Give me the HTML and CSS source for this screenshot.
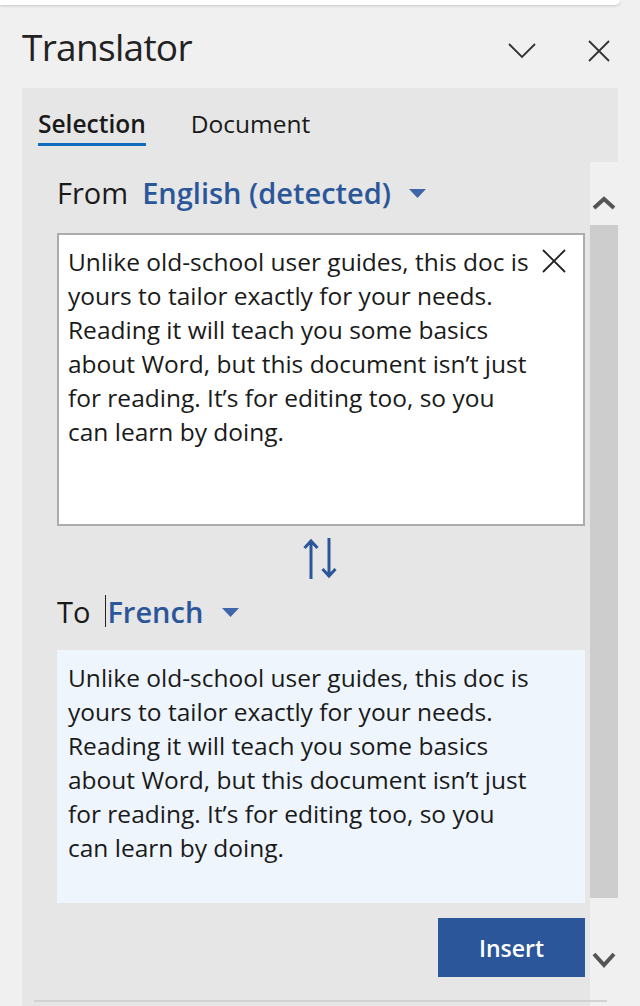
FILE: index.html
```html
<!DOCTYPE html>
<html>
<head>
<meta charset="utf-8">
<link rel="stylesheet" href="styles.css">
</head>
<body>
<div class="topbar"></div>
<div class="header">
  <div class="title">Translator</div>
  <div class="header-icons">
    <svg class="hicon" width="28" height="16" viewBox="0 0 28 16"><path d="M1 1 L14 14 L27 1" fill="none" stroke="#333" stroke-width="1.8"/></svg>
    <svg class="hicon" width="22" height="22" viewBox="0 0 22 22"><path d="M1 1 L21 21 M21 1 L1 21" fill="none" stroke="#333" stroke-width="1.8"/></svg>
  </div>
</div>
<div class="panel">
  <div class="tabs">
    <div class="tab active">Selection</div>
    <div class="tab">Document</div>
  </div>
  <div class="body">
    <div class="content">
      <div class="lang-row from-row">
        <span class="lang-label">From</span>
        <span class="lang-value">English (detected)</span>
        <svg class="caret" width="17" height="9" viewBox="0 0 17 9"><path d="M0 0 H17 L8.5 9 Z" fill="#3f66a8"/></svg>
      </div>
      <div class="source-box">
        <p class="text">Unlike old-school user guides, this doc is<br>yours to tailor exactly for your needs.<br>Reading it will teach you some basics<br>about Word, but this document isn’t just<br>for reading. It’s for editing too, so you<br>can learn by doing.</p>
        <svg class="clear" width="26" height="24" viewBox="0 0 26 24"><path d="M2 1 L24 23 M24 1 L2 23" fill="none" stroke="#222" stroke-width="1.8"/></svg>
      </div>
      <div class="swap">
        <svg width="36" height="42" viewBox="0 0 36 42"><path d="M8 41 V3 M1.5 10 L8 3 L14.5 10 M26 0 V38 M19.5 31 L26 38 L32.5 31" fill="none" stroke="#2b579a" stroke-width="3"/></svg>
      </div>
      <div class="lang-row to-row">
        <span class="lang-label">To</span>
        <span class="cursor"></span>
        <span class="lang-value">French</span>
        <svg class="caret" width="17" height="9" viewBox="0 0 17 9"><path d="M0 0 H17 L8.5 9 Z" fill="#3f66a8"/></svg>
      </div>
      <div class="target-box">
        <p class="text">Unlike old-school user guides, this doc is<br>yours to tailor exactly for your needs.<br>Reading it will teach you some basics<br>about Word, but this document isn’t just<br>for reading. It’s for editing too, so you<br>can learn by doing.</p>
      </div>
      <div class="actions">
        <button class="insert">Insert</button>
      </div>
    </div>
    <div class="scrollbar">
      <svg class="sarrow up" width="24" height="14" viewBox="0 0 24 14"><path d="M2 12 L12 3 L22 12" fill="none" stroke="#555" stroke-width="4"/></svg>
      <div class="thumb"></div>
      <svg class="sarrow down" width="24" height="16" viewBox="0 0 24 16"><path d="M2 2 L12 13 L22 2" fill="none" stroke="#555" stroke-width="4"/></svg>
    </div>
  </div>
  <div class="bottom-line"></div>
</div>
</body>
</html>
```
FILE: styles.css
```css
html, body {
  margin: 0;
  padding: 0;
}
body {
  width: 640px;
  height: 1006px;
  overflow: hidden;
  background: #f0f0f0;
  font-family: "Open Sans", "Noto Sans", sans-serif;
  color: #1a1a1a;
}
.topbar {
  width: 620px;
  height: 5px;
  background: #ffffff;
  border-bottom-right-radius: 10px;
  box-shadow: 0 1px 3px rgba(0,0,0,0.18);
}
.header {
  height: 83px;
  display: flex;
  align-items: flex-start;
  justify-content: space-between;
  padding-left: 22px;
  padding-right: 30px;
  box-sizing: border-box;
}
.title {
  font-size: 37px;
  font-weight: 400;
  color: #222;
  margin-top: 19px;
  line-height: 46px;
  letter-spacing: -0.7px;
}
.header-icons {
  display: flex;
  align-items: center;
  gap: 52px;
  margin-top: 35px;
}
.panel {
  margin-left: 22px;
  width: 596px;
  height: 918px;
  background: #e6e6e6;
  position: relative;
  display: flex;
  flex-direction: column;
}
.tabs {
  height: 74px;
  flex-shrink: 0;
  display: flex;
  gap: 45px;
  padding-left: 16px;
  box-sizing: border-box;
  padding-top: 20px;
}
.tab {
  font-size: 24.5px;
  line-height: 32px;
  height: 35px;
  color: #1a1a1a;
}
.tab.active {
  font-weight: 600;
  border-bottom: 3px solid #0f6cbd;
}
.body {
  display: flex;
  flex: 1;
  min-height: 0;
}
.content {
  width: 568px;
  padding-left: 35px;
  padding-right: 5px;
  box-sizing: border-box;
}
.lang-row {
  display: flex;
  align-items: center;
  font-size: 29px;
}
.from-row {
  height: 71px;
  gap: 14px;
  padding-bottom: 10px;
  box-sizing: border-box;
}
.lang-label {
  color: #1a1a1a;
}
.lang-value {
  color: #2b579a;
  font-weight: 600;
}
.from-row .caret {
  margin-left: 4px;
  margin-top: 2px;
}
.to-row {
  height: 70px;
  padding-bottom: 8px;
  box-sizing: border-box;
}
.to-row .cursor {
  display: inline-block;
  width: 1px;
  height: 32px;
  background: #222;
  margin-left: 15px;
  margin-right: 1px;
}
.to-row .caret {
  margin-left: 19px;
  margin-top: 2px;
}
.source-box {
  height: 293px;
  background: #ffffff;
  border: 2px solid #acacac;
  box-sizing: border-box;
  position: relative;
  padding: 10px 9px;
}
.text {
  margin: 0;
  font-size: 24.5px;
  line-height: 34px;
  color: #1a1a1a;
  white-space: nowrap;
}
.clear {
  position: absolute;
  top: 14px;
  right: 16px;
}
.swap {
  height: 54px;
  display: flex;
  justify-content: center;
  align-items: flex-end;
}
.target-box {
  height: 253px;
  background: #eef5fd;
  box-sizing: border-box;
  padding: 11px 11px;
}
.actions {
  display: flex;
  justify-content: flex-end;
  padding-top: 15px;
}
.insert {
  width: 147px;
  height: 59px;
  background: #2b579a;
  color: #ffffff;
  border: none;
  font-family: "Open Sans", "Noto Sans", sans-serif;
  font-size: 23px;
  font-weight: 600;
  padding: 0;
}
.scrollbar {
  width: 28px;
  background: #f0f0f0;
  display: flex;
  flex-direction: column;
  align-items: center;
}
.sarrow {
  flex-shrink: 0;
}
.sarrow.up {
  margin-top: 34px;
}
.thumb {
  flex-shrink: 0;
  width: 28px;
  height: 673px;
  background: #cdcdcd;
  margin-top: 15px;
}
.sarrow.down {
  margin-top: 54px;
}
.bottom-line {
  position: absolute;
  left: 12px;
  right: 11px;
  bottom: 4px;
  height: 2px;
  background: #d2d2d2;
}
```
